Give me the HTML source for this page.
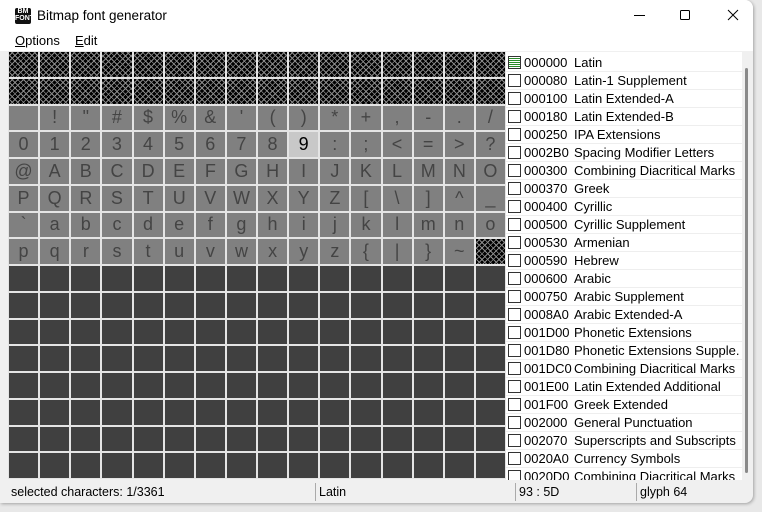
<!DOCTYPE html><html><head><meta charset="utf-8"><style>
body{margin:0;width:762px;height:512px;background:#e8e8e8;font-family:"Liberation Sans",sans-serif;overflow:hidden;position:relative}
#win{position:absolute;left:0;top:0;width:753px;height:503px;background:#f0f0f0;border-radius:0 8px 8px 0;box-shadow:1px 1px 3px rgba(0,0,0,.3)}
#title{position:absolute;left:0;top:0;width:753px;height:30px;background:#fff;border-radius:0 8px 0 0}
#title .t{position:absolute;left:37px;top:8px;font-size:13.5px;color:#000}
#icon{position:absolute;left:15px;top:8px;width:16px;height:16px;background:#111;color:#fff;font-size:7px;line-height:7px;font-weight:bold;text-align:center;border-radius:2px}
#menu{position:absolute;left:0;top:30px;width:753px;height:21px;background:#fff;font-size:13px}
#menu span{position:absolute;top:3px}
#grid{position:absolute;left:8px;top:51px;width:498px;height:428px;background:#e4e4e4;display:grid;grid-template-columns:repeat(16,1fr);grid-template-rows:repeat(16,1fr);gap:2px;padding:1px;box-sizing:border-box}
#grid div{font-size:18px;color:#444;text-align:center;display:flex;align-items:center;justify-content:center}
.x{background-color:#000;background-image:repeating-linear-gradient(45deg,transparent 0 3px,#888 3px 4px),repeating-linear-gradient(-45deg,transparent 0 3px,#888 3px 4px)}
.g{background:#808080}.d{background:#404040}.s{background:#c8c8c8;color:#000!important}
#list{position:absolute;left:506px;top:52px;width:236px;height:428px;background:#fff;overflow:hidden;font-size:13px;padding-top:2px;box-sizing:border-box}
#list div{height:18px;border-bottom:1px solid #eee;box-sizing:border-box;white-space:nowrap;line-height:17px;position:relative;padding-left:18px;color:#000}
#list div:before{content:"";position:absolute;left:2px;top:2px;width:11px;height:11px;border:1px solid #333;background:#fff}
#list div.c:before{background:repeating-linear-gradient(#fff 0 1px,#2a8a2a 1px 2px);}
#list b{font-weight:normal;display:inline-block;width:50px}
#sb{position:absolute;left:742px;top:52px;width:10px;height:428px;background:#f0f0f0}
#sb i{position:absolute;left:3px;top:16px;width:3px;height:405px;background:#8a8a8a;border-radius:2px}
#status{position:absolute;left:0;top:481px;width:753px;height:22px;font-size:12.5px}
#status span{position:absolute;top:2px;height:18px;line-height:18px;border-left:1px solid #aaa;padding-left:3px}
</style></head><body><div id="win">
<div id="title"><div id="icon">BM<br>FONT</div><div class="t">Bitmap font generator</div>
<svg style="position:absolute;left:632px;top:8px" width="16" height="16"><path d="M2 7.5h11" stroke="#000"/></svg>
<svg style="position:absolute;left:678px;top:8px" width="16" height="16"><rect x="2.5" y="2.5" width="9" height="9" rx="1" fill="none" stroke="#000"/></svg>
<svg style="position:absolute;left:726px;top:8px" width="16" height="16"><path d="M2 2l10 10M12 2L2 12" stroke="#000"/></svg></div>
<div id="menu"><span style="left:15px"><u>O</u>ptions</span><span style="left:75px"><u>E</u>dit</span></div>
<div id="grid"></div>
<div id="list"></div><div id="sb"><i></i></div>
<div id="status"><span style="left:8px;border:none">selected characters: 1/3361</span><span style="left:315px;width:196px">Latin</span><span style="left:515px;width:118px">93 : 5D</span><span style="left:636px">glyph 64</span></div>
</div>
<script>
var g=document.getElementById('grid'),h='';
for(var i=0;i<256;i++){var c='d',t='';
if(i<32||i==127)c='x';else if(i<128){c='g';t=String.fromCharCode(i);if(i==57)c='g s';}
t=t.replace('&','&amp;').replace('<','&lt;').replace('>','&gt;');
h+='<div class="'+c+'">'+t+'</div>';}
g.innerHTML=h;
var L=[["000000","Latin"],["000080","Latin-1 Supplement"],["000100","Latin Extended-A"],["000180","Latin Extended-B"],["000250","IPA Extensions"],["0002B0","Spacing Modifier Letters"],["000300","Combining Diacritical Marks"],["000370","Greek"],["000400","Cyrillic"],["000500","Cyrillic Supplement"],["000530","Armenian"],["000590","Hebrew"],["000600","Arabic"],["000750","Arabic Supplement"],["0008A0","Arabic Extended-A"],["001D00","Phonetic Extensions"],["001D80","Phonetic Extensions Supple."],["001DC0","Combining Diacritical Marks"],["001E00","Latin Extended Additional"],["001F00","Greek Extended"],["002000","General Punctuation"],["002070","Superscripts and Subscripts"],["0020A0","Currency Symbols"],["0020D0","Combining Diacritical Marks"]];
h='';L.forEach(function(r,k){h+='<div'+(k==0?' class="c"':'')+'><b>'+r[0]+'</b>'+r[1]+'</div>';});
document.getElementById('list').innerHTML=h;
</script></body></html>
